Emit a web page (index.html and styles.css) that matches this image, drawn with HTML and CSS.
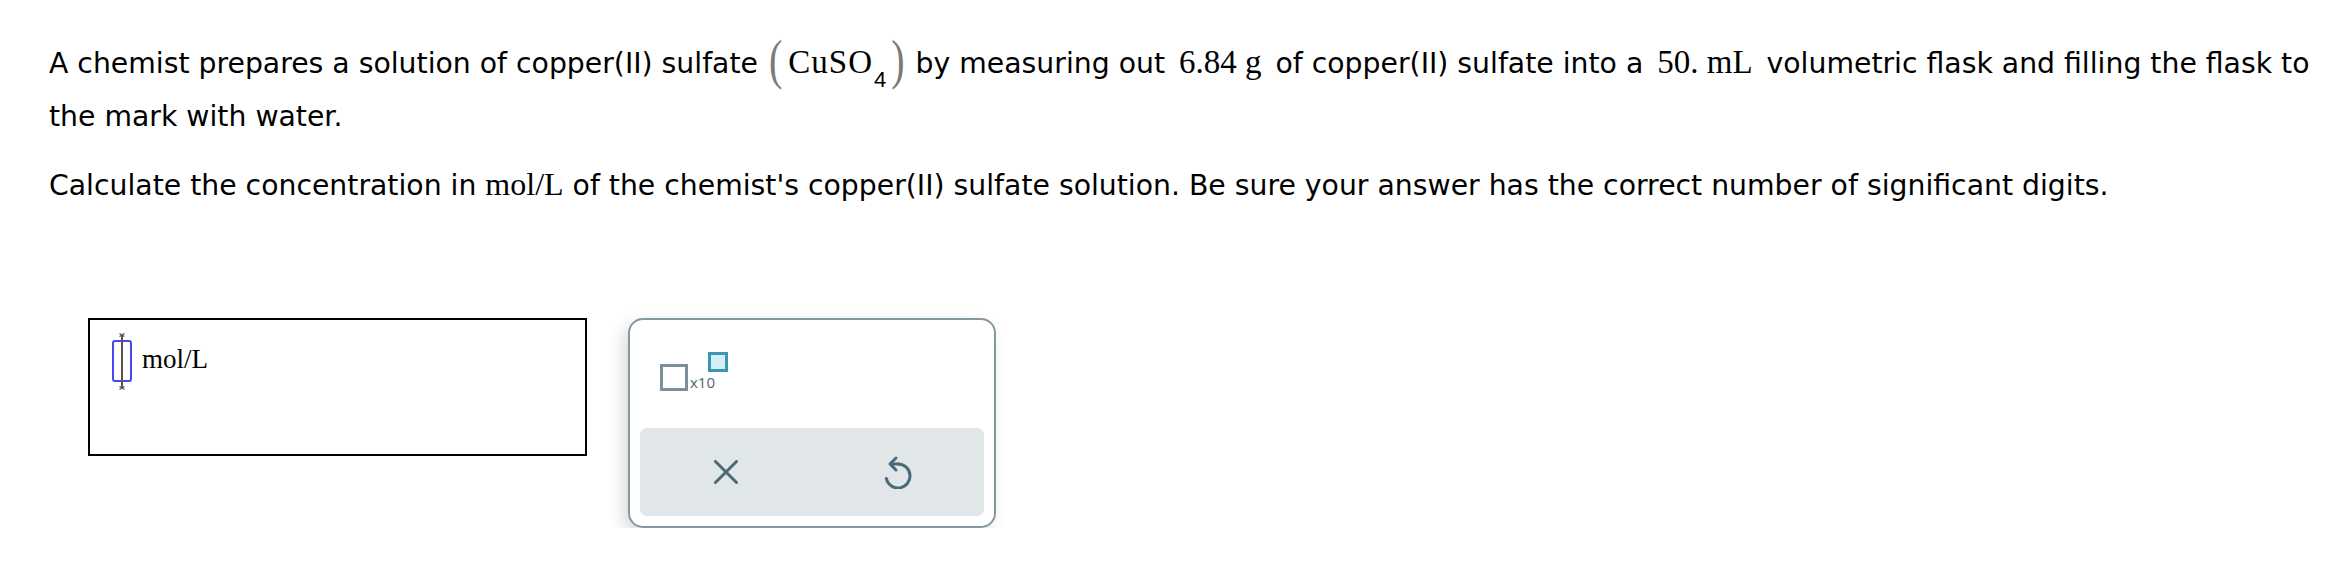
FILE: index.html
```html
<!DOCTYPE html>
<html lang="en">
<head>
<meta charset="utf-8">
<title>Concentration question</title>
<link rel="stylesheet" href="styles.css">
</head>
<body>
<main class="page">
  <p class="q q1">A chemist prepares a solution of copper(II) sulfate <span class="paren">(</span><span class="m formula">CuSO<span class="sub">4</span></span><span class="paren">)</span> by measuring out <span class="m">6.84 g</span> of copper(II) sulfate into a <span class="m">50. mL</span> volumetric flask and filling the flask to the mark with water.</p>
  <p class="q q2">Calculate the concentration in <span class="m">mol/L</span> of the chemist's copper(II) sulfate solution. Be sure your answer has the correct number of significant digits.</p>
  <div class="answer-row">
    <div class="answer-box">
      <svg class="cursor" width="24" height="57" viewBox="0 0 24 57" aria-hidden="true">
        <rect x="3" y="8" width="18" height="40" rx="2" fill="none" stroke="#4646f2" stroke-width="2"/>
        <line x1="12" y1="2" x2="12" y2="55" stroke="#555" stroke-width="2"/>
        <path d="M9.5 0.5 L14.5 3.5 M14.5 0.5 L9.5 3.5 M9.5 53.5 L14.5 56.5 M14.5 53.5 L9.5 56.5" stroke="#555" stroke-width="1.2"/>
      </svg>
      <span class="unit">mol/L</span>
    </div>
    <div class="panel">
      <div class="sci">
        <div class="sci-row">
          <span class="box-big"></span>
          <span class="x10">x10</span>
          <span class="box-sup"></span>
        </div>
      </div>
      <div class="actions">
        <button class="btn" type="button" aria-label="Clear">
          <svg width="24" height="24" viewBox="0 0 24 24" aria-hidden="true">
            <path d="M1.5 1.5 L22.5 22.5 M22.5 1.5 L1.5 22.5" stroke="#4b6a78" stroke-width="3" stroke-linecap="round" fill="none"/>
          </svg>
        </button>
        <button class="btn" type="button" aria-label="Undo">
          <svg width="32" height="34" viewBox="0 0 32 34" aria-hidden="true">
            <path d="M16 9 A12 12 0 1 1 4.3 23.5" stroke="#4b6a78" stroke-width="3" stroke-linecap="round" fill="none"/>
            <path d="M16 9 H8 M14 3 L8 9 L14 15" stroke="#4b6a78" stroke-width="3" stroke-linecap="round" stroke-linejoin="round" fill="none"/>
          </svg>
        </button>
      </div>
    </div>
  </div>
</main>
</body>
</html>
```

FILE: styles.css
```css
html, body {
  margin: 0;
  padding: 0;
  background: #ffffff;
}

.page {
  padding: 38px 0 0 49px;
  font-family: "DejaVu Sans", Verdana, sans-serif;
  color: #000;
}

.q {
  margin: 0;
  font-size: 28.3px;
  line-height: 51px;
}

.q1 {
  max-width: 2275px;
}

.q2 {
  margin-top: 18px;
}

.m {
  font-family: "Liberation Serif", "Times New Roman", serif;
  font-size: 32px;
  line-height: 1;
}

.q1 .m {
  font-size: 33px;
  margin: 0 5px;
}

.q1 .formula {
  margin: 0 2px 0 4px;
  letter-spacing: 1px;
}

.sub {
  font-family: "Liberation Sans", Arial, sans-serif;
  font-size: 22px;
  margin-left: 1px;
  vertical-align: -14px;
  line-height: 1;
}

.paren {
  display: inline-block;
  margin: 0 2px;
  font-family: "Liberation Serif", "Times New Roman", serif;
  font-size: 40px;
  line-height: 1;
  color: #7a7a7a;
  transform: scaleY(1.35);
}

.answer-row {
  display: flex;
  align-items: flex-start;
  gap: 41px;
  margin-top: 107px;
  padding-left: 39px;
}

.answer-box {
  box-sizing: border-box;
  width: 499px;
  height: 138px;
  border: 2px solid #000;
  padding: 13px 0 0 20px;
  display: flex;
  align-items: flex-start;
  gap: 8px;
}

.cursor {
  display: block;
  flex: none;
}

.unit {
  margin-top: 13px;
  font-family: "Liberation Serif", "Times New Roman", serif;
  font-size: 27px;
  line-height: 1;
}

.panel {
  box-sizing: border-box;
  width: 368px;
  height: 210px;
  border: 2px solid #86989f;
  border-radius: 15px;
  background: #fff;
  box-shadow: -5px 6px 16px rgba(0, 0, 0, 0.14);
  display: flex;
  flex-direction: column;
}

.sci {
  box-sizing: border-box;
  height: 108px;
  padding: 32px 0 0 30px;
}

.sci-row {
  display: flex;
  align-items: flex-start;
}

.box-big {
  box-sizing: border-box;
  width: 28px;
  height: 27px;
  margin-top: 12px;
  border: 3px solid #7a8f99;
}

.x10 {
  align-self: flex-end;
  margin-left: 2px;
  margin-bottom: 1px;
  font-family: "Open Sans", "DejaVu Sans", sans-serif;
  font-size: 15px;
  line-height: 15px;
  color: #4e6672;
}

.box-sup {
  box-sizing: border-box;
  width: 20px;
  height: 20px;
  margin-left: -7px;
  border: 3px solid #3a97b2;
  background: #d4eef4;
}

.actions {
  flex: none;
  height: 88px;
  margin: 0 10px 10px;
  background: #e1e6e9;
  border-radius: 7px;
  display: flex;
}

.btn {
  flex: 1;
  border: 0;
  background: transparent;
  padding: 0;
  margin: 0;
  display: flex;
  align-items: center;
  justify-content: center;
  cursor: pointer;
}

.btn svg {
  display: block;
}
```
